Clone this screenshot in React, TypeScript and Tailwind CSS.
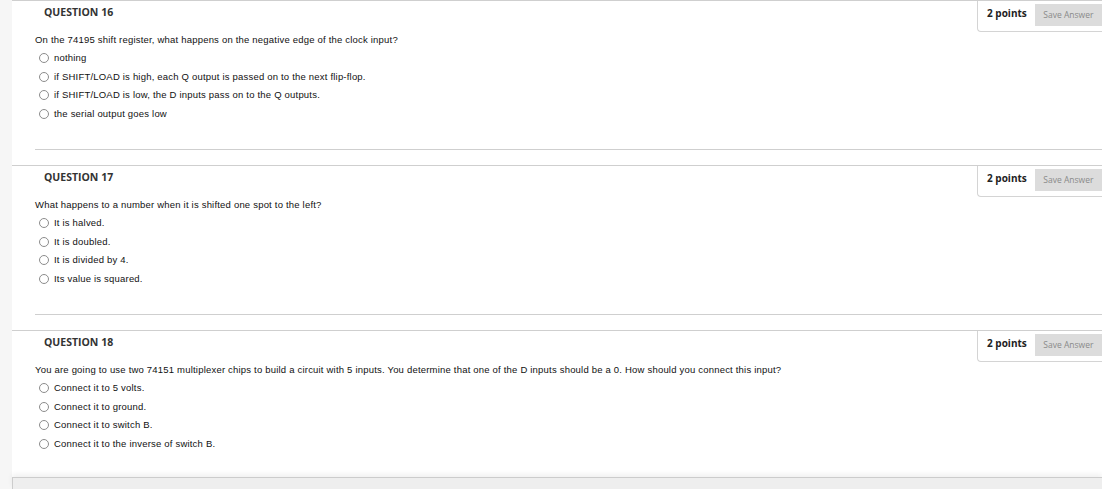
const questions = [
  {
    num: 16,
    text: 'On the 74195 shift register, what happens on the negative edge of the clock input?',
    options: [
      'nothing',
      'if SHIFT/LOAD is high, each Q output is passed on to the next flip-flop.',
      'if SHIFT/LOAD is low, the D inputs pass on to the Q outputs.',
      'the serial output goes low',
    ],
  },
  {
    num: 17,
    text: 'What happens to a number when it is shifted one spot to the left?',
    options: ['It is halved.', 'It is doubled.', 'It is divided by 4.', 'Its value is squared.'],
  },
  {
    num: 18,
    text: 'You are going to use two 74151 multiplexer chips to build a circuit with 5 inputs. You determine that one of the D inputs should be a 0. How should you connect this input?',
    options: [
      'Connect it to 5 volts.',
      'Connect it to ground.',
      'Connect it to switch B.',
      'Connect it to the inverse of switch B.',
    ],
  },
]

function Question({ q }: { q: (typeof questions)[number] }) {
  return (
    <div className="border-t border-[#cfcfcf] h-[165px] shrink-0">
      {/* header */}
      <div className="flex justify-between items-start h-[31px]">
        <h3 className="pl-[32px] pt-[3px] text-[10.5px] leading-[16px] font-bold text-[#333] font-['Open_Sans',sans-serif]">
          QUESTION {q.num}
        </h3>
        <div className="w-[125px] h-[31px] border-l border-b border-[#d4d4d4] rounded-bl-[4px] flex items-start pt-[3px] pl-[9px] gap-[8px]">
          <span className="text-[10px] leading-[19px] font-bold text-[#222] font-['Open_Sans',sans-serif]">2 points</span>
          <button className="h-[22px] flex-1 bg-[#dcdcdc] text-[8.5px] text-[#8a8a8a] font-['Open_Sans',sans-serif]">
            Save Answer
          </button>
        </div>
      </div>

      {/* body */}
      <div className="pl-[23px] font-['Liberation_Sans',Arial,sans-serif] text-[#111] text-[9.5px] tracking-[0.2px]">
        <p className="mt-[2px] leading-[12px]">{q.text}</p>
        <ul className="mt-[3px]">
          {q.options.map((o) => (
            <li key={o} className="h-[18.5px] flex items-center pl-[4px]">
              <span className="w-[10px] h-[10px] rounded-full border border-[#8c8c8c] bg-white shrink-0" />
              <span className="ml-[5px] leading-[12px]">{o}</span>
            </li>
          ))}
        </ul>
        <hr className="mt-[26px] border-t border-[#cfcfcf]" />
      </div>
    </div>
  )
}

export default function App() {
  return (
    <div className="h-[489px] w-[1102px] overflow-hidden flex bg-white">
      <div className="w-[12px] shrink-0 bg-[#f6f6f6]" />
      <div className="flex-1 flex flex-col">
        {questions.map((q) => (
          <Question key={q.num} q={q} />
        ))}
      </div>

      {/* sticky submit bar */}
      <div className="fixed bottom-0 left-[12px] right-0 h-[12px] bg-[#eeeeee] border-t border-l border-[#cccccc] shadow-[0_-3px_5px_rgba(0,0,0,0.06)]" />
    </div>
  )
}
